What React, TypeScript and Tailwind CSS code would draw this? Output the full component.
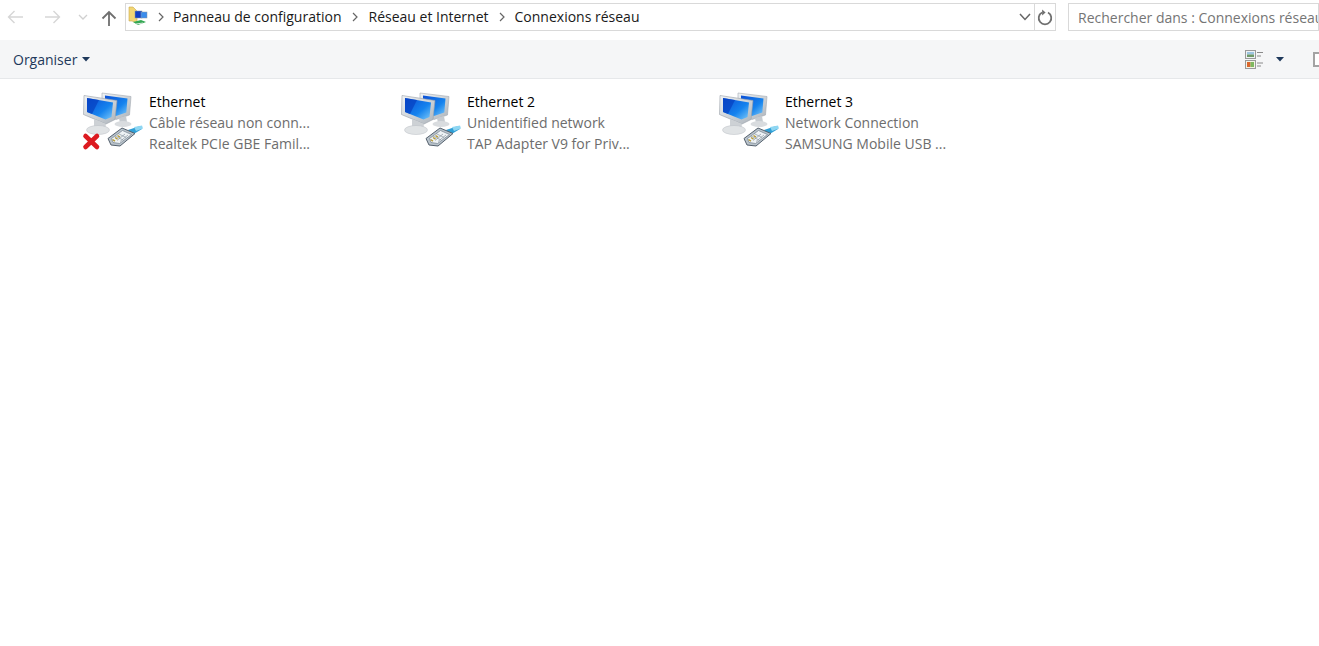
import React from "react";

function NetIcon({ error }: { error?: boolean }) {
  return (
    <svg width="62" height="62" viewBox="0 0 62 62" className="shrink-0">
      <defs>
        <linearGradient id="scr" x1="0" y1="0" x2="1" y2="1">
          <stop offset="0" stopColor="#0b4fd6" />
          <stop offset="0.6" stopColor="#1583ee" />
          <stop offset="1" stopColor="#7cc8f8" />
        </linearGradient>
        <linearGradient id="bez" x1="0" y1="0" x2="1" y2="1">
          <stop offset="0" stopColor="#f0f3f5" />
          <stop offset="1" stopColor="#aeb5bc" />
        </linearGradient>
      </defs>
      {/* back monitor */}
      <path d="M20 1 L49 4.5 L47.5 23 L34 27.5 L20 22 Z" fill="url(#bez)" stroke="#a2aab2" strokeWidth="0.6" />
      <path d="M23 3.5 L45.5 6.5 L44.3 20.5 L34 24 L23 20 Z" fill="url(#scr)" />
      <path d="M37 26 L44 24 L45 30 L38 31 Z" fill="#c6cbd0" />
      <ellipse cx="41" cy="32" rx="8.5" ry="3" fill="#d9dcdf" />
      {/* front monitor */}
      <path d="M2 3.5 L35 8.5 L33 27.5 L24 32 L1.5 22.5 Z" fill="url(#bez)" stroke="#98a0a8" strokeWidth="0.6" />
      <path d="M5 6 L31 10.5 L29.5 25 L23.5 27.5 L5 20 Z" fill="url(#scr)" />
      <path d="M5 6 L17 8.1 L10 22 L5 20 Z" fill="#0640c0" opacity="0.7" />
      <path d="M12 27 L24 32 L23 38 L12 35 Z" fill="#cdd1d5" />
      <ellipse cx="16" cy="38" rx="11.5" ry="4.5" fill="#e0e3e5" stroke="#b8bdc2" strokeWidth="0.5" />
      {/* cable */}
      <path d="M46 38 L58 34 L60 37 L50 43 Z" fill="#2f9fd6" />
      <path d="M52 35 L60 33.5 L61 36.5 L54 39 Z" fill="#8ed6f2" />
      {/* plug */}
      <path d="M26 46.5 L40 36 L53 41.5 L38 54 L29 53 Z" fill="#b9c3cb" stroke="#55616e" strokeWidth="1" />
      <path d="M29.5 46.5 L40.5 38.5 L49.5 42.5 L37.5 51.5 L31 50.5 Z" fill="#eef2f5" stroke="#76838f" strokeWidth="0.7" />
      <path d="M35 48.5 L43 42 M38 49.5 L46 43 M33 44 L41 48 M36 41.5 L44 45.5" stroke="#8b97a1" strokeWidth="0.7" />
      <path d="M30.5 47.5 L33 49.2 M33 45.5 L35.5 47.2 M35.5 43.5 L38 45.2" stroke="#b59a3a" strokeWidth="1.4" />
      {error && (
        <g stroke="#dc1a20" strokeWidth="4.6" strokeLinecap="round">
          <path d="M3.5 44 L15 55" />
          <path d="M15 44 L3.5 55" />
        </g>
      )}
    </svg>
  );
}

function Item({ name, l2, l3, error }: { name: string; l2: string; l3: string; error?: boolean }) {
  return (
    <div className="flex w-[318px] gap-[5px]">
      <NetIcon error={error} />
      <div className="-mt-[1px] flex flex-col text-[14px] leading-[21px] text-[#6d6d6d]">
        <span className="text-black">{name}</span>
        <span>{l2}</span>
        <span>{l3}</span>
      </div>
    </div>
  );
}

function Sep() {
  return (
    <svg width="8" height="10" viewBox="0 0 8 10" className="shrink-0">
      <path d="M2 1 L6 5 L2 9" fill="none" stroke="#666" strokeWidth="1.2" />
    </svg>
  );
}

function Arrow({ flip, color }: { flip?: boolean; color: string }) {
  return (
    <svg width="16" height="14" viewBox="0 0 16 14" className={flip ? "rotate-180" : ""}>
      <path d="M16 7 H1.5 M7.5 1 L1.5 7 L7.5 13" fill="none" stroke={color} strokeWidth="1.4" />
    </svg>
  );
}

export default function App() {
  return (
    <div className="flex h-[646px] w-[1319px] flex-col overflow-hidden bg-white font-['Open_Sans','Noto_Sans',sans-serif]">
      <div className="flex h-[40px] items-start pt-[3px]">
        <div className="flex h-[28px] w-[125px] items-center">
          <div className="ml-[7px]"><Arrow color="#d6d6d6" /></div>
          <div className="ml-[22px]"><Arrow flip color="#d6d6d6" /></div>
          <svg width="10" height="6" viewBox="0 0 10 6" className="ml-[17px]">
            <path d="M1 1 L5 5 L9 1" fill="none" stroke="#d0d0d0" strokeWidth="1.3" />
          </svg>
          <svg width="16" height="17" viewBox="0 0 16 17" className="ml-[13px] mt-[2px]">
            <path d="M8 16 V2 M1.5 8.5 L8 2 L14.5 8.5" fill="none" stroke="#6f6f6f" strokeWidth="1.8" />
          </svg>
        </div>
        <div className="flex h-[28px] w-[931px] items-center border border-[#d9d9d9]">
          <svg width="22" height="22" viewBox="0 0 22 22" className="ml-[2px] shrink-0">
            <path d="M1 1 H5 L9 5 V17 L4 15 H1 Z" fill="#f2d675" stroke="#c9a94c" strokeWidth="0.6" />
            <rect x="7" y="5" width="7" height="7" fill="#1240c4" stroke="#8a97a5" strokeWidth="0.5" />
            <rect x="13" y="6" width="6" height="6" fill="#3a8cec" stroke="#8a97a5" strokeWidth="0.5" />
            <path d="M5 16 L13 14 L18 16 L10 19 Z" fill="#33a853" />
            <path d="M8 18 L15 17" stroke="#dfe7df" strokeWidth="1" />
          </svg>
          <div className="ml-[7px]"><Sep /></div>
          <div className="-mt-[1px] ml-[8px] flex items-center text-[14px] text-[#1a1a1a]">
            <span>Panneau de configuration</span>
            <div className="mx-[9.5px]"><Sep /></div>
            <span>Réseau et Internet</span>
            <div className="mx-[9px]"><Sep /></div>
            <span>Connexions réseau</span>
          </div>
          <svg width="12" height="8" viewBox="0 0 12 8" className="ml-auto mr-[3px]">
            <path d="M1 1 L6 6.5 L11 1" fill="none" stroke="#666" strokeWidth="1.5" />
          </svg>
          <div className="flex h-full w-[21px] items-center justify-center border-l border-[#d9d9d9]">
            <svg width="16" height="17" viewBox="0 0 16 17">
              <path d="M5 3.5 A6.3 6.3 0 1 0 11 3.5" fill="none" stroke="#6f6f6f" strokeWidth="1.8" />
              <path d="M8.5 0.5 V6.5 L5 3.5 Z" fill="#6f6f6f" transform="rotate(180 6.8 3.5)" />
            </svg>
          </div>
        </div>
        <div className="ml-[12px] flex h-[28px] flex-1 items-center overflow-hidden whitespace-nowrap border border-[#d9d9d9] pl-[9px] pt-[1px] text-[14px] text-[#757575]">
          Rechercher dans : Connexions réseau
        </div>
      </div>
      <div className="flex h-[39px] items-center border-b border-[#e6e8ea] bg-[#f5f6f7]">
        <span className="ml-[13px] mt-[1px] text-[14px] text-[#1e395b]">Organiser</span>
        <svg width="8" height="5" viewBox="0 0 8 5" className="ml-[5px]"><path d="M0 0 H8 L4 4.5 Z" fill="#1e395b" /></svg>
        <div className="flex-1" />
        <div className="flex w-[74px] items-center overflow-hidden">
          <svg width="19" height="19" viewBox="0 0 19 19" className="shrink-0">
            <rect x="0.5" y="0.5" width="10" height="8" fill="#eef2f5" stroke="#9a9a9a" />
            <rect x="2" y="2" width="7" height="2.5" fill="#9cc4e0" />
            <rect x="2" y="4.5" width="7" height="2.5" fill="#6f9a68" />
            <rect x="0.5" y="10.5" width="10" height="8" fill="#f3f3e6" stroke="#9a9a9a" />
            <rect x="2" y="12" width="3.5" height="5" fill="#d9662c" />
            <rect x="5.5" y="12" width="3.5" height="5" fill="#7fb85f" />
            <path d="M12 2.5 H18 M12 6 H16 M12 13 H18 M12 16 H16" stroke="#8a8a8a" />
          </svg>
          <svg width="8" height="5" viewBox="0 0 8 5" className="ml-[12px] shrink-0"><path d="M0 0 H8 L4 4.5 Z" fill="#1e395b" /></svg>
          <div className="ml-[29px] h-[15px] w-[12px] shrink-0 border-2 border-[#a3a3a3] bg-white" />
        </div>
      </div>
      <div className="flex pl-[82px] pt-[13px]">
        <Item name="Ethernet" l2="Câble réseau non conn..." l3="Realtek PCIe GBE Famil..." error />
        <Item name="Ethernet 2" l2="Unidentified network" l3="TAP Adapter V9 for Priv..." />
        <Item name="Ethernet 3" l2="Network Connection" l3="SAMSUNG Mobile USB ..." />
      </div>
    </div>
  );
}
